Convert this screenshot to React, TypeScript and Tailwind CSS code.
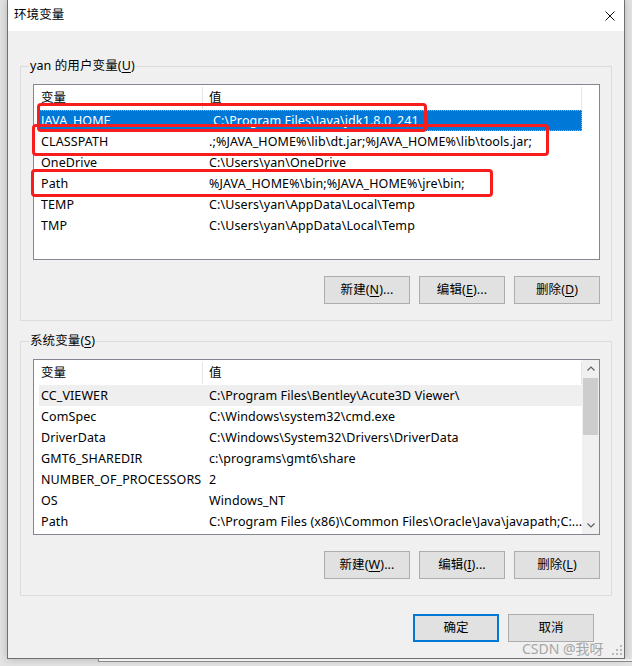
import React from 'react';

type Row = { name: string; value: string };

const userVars: Row[] = [
  { name: 'JAVA_HOME', value: 'C:\\Program Files\\Java\\jdk1.8.0_241' },
  { name: 'CLASSPATH', value: '.;%JAVA_HOME%\\lib\\dt.jar;%JAVA_HOME%\\lib\\tools.jar;' },
  { name: 'OneDrive', value: 'C:\\Users\\yan\\OneDrive' },
  { name: 'Path', value: '%JAVA_HOME%\\bin;%JAVA_HOME%\\jre\\bin;' },
  { name: 'TEMP', value: 'C:\\Users\\yan\\AppData\\Local\\Temp' },
  { name: 'TMP', value: 'C:\\Users\\yan\\AppData\\Local\\Temp' },
];

const systemVars: Row[] = [
  { name: 'CC_VIEWER', value: 'C:\\Program Files\\Bentley\\Acute3D Viewer\\' },
  { name: 'ComSpec', value: 'C:\\Windows\\system32\\cmd.exe' },
  { name: 'DriverData', value: 'C:\\Windows\\System32\\Drivers\\DriverData' },
  { name: 'GMT6_SHAREDIR', value: 'c:\\programs\\gmt6\\share' },
  { name: 'NUMBER_OF_PROCESSORS', value: '2' },
  { name: 'OS', value: 'Windows_NT' },
  { name: 'Path', value: 'C:\\Program Files (x86)\\Common Files\\Oracle\\Java\\javapath;C:...' },
];

function Button({ label, accel, tail, primary }: { label: string; accel?: string; tail?: string; primary?: boolean }) {
  return (
    <div
      className={`w-[86px] h-[28px] flex items-center justify-center bg-[#e1e1e1] ${
        primary ? 'border-2 border-[#0078d7]' : 'border border-[#adadad]'
      }`}
    >
      <span>
        {label}
        {accel && (
          <>
            (<span className="underline underline-offset-2">{accel}</span>)
          </>
        )}
        {tail}
      </span>
    </div>
  );
}

function Chevron({ up }: { up?: boolean }) {
  return (
    <div className="h-[17px] flex items-center justify-center">
      <svg width="8" height="5" viewBox="0 0 8 5">
        <polyline
          points={up ? '0.5,4.5 4,1 7.5,4.5' : '0.5,0.5 4,4 7.5,0.5'}
          fill="none"
          stroke="#606060"
          strokeWidth="1.2"
        />
      </svg>
    </div>
  );
}

function VarList({
  rows,
  selected,
  hovered,
  scrollbar,
}: {
  rows: Row[];
  selected?: number;
  hovered?: number;
  scrollbar?: boolean;
}) {
  return (
    <div className="h-[176px] border border-[#828790] bg-white flex overflow-hidden">
      <div className="w-[548px] flex flex-col">
        <div className="h-[25px] flex items-center shrink-0 pt-[1px]">
          <div className="w-[169px] h-[22px] pl-[7px] flex items-center border-r border-[#e5e5e5]">变量</div>
          <div className="w-[379px] h-[22px] pl-[6px] flex items-center border-r border-[#e5e5e5]">值</div>
        </div>
        {rows.map((r, i) => {
          const sel = i === selected;
          const hov = i === hovered;
          return (
            <div
              key={r.name + i}
              className={`ml-[5px] w-[543px] h-[21px] pt-[2px] shrink-0 flex items-center whitespace-nowrap overflow-hidden ${
                sel
                  ? 'bg-[#0078d7] text-white outline outline-1 outline-dotted outline-offset-[-1px] outline-[#e0a060]'
                  : hov
                  ? 'bg-[#efefef]'
                  : ''
              }`}
            >
              <div className="w-[170px] shrink-0 pl-[2px]">{r.name}</div>
              <div className={sel ? 'pl-[4px]' : ''}>{r.value}</div>
            </div>
          );
        })}
      </div>
      {scrollbar && (
        <div className="w-[17px] bg-[#f0f0f0] flex flex-col">
          <Chevron up />
          <div className="mx-[1px] mt-[1px] h-[57px] bg-[#cdcdcd]" />
          <div className="flex-1" />
          <Chevron />
        </div>
      )}
    </div>
  );
}

function Group({
  title,
  accel,
  children,
  className,
}: {
  title: string;
  accel: string;
  children: React.ReactNode;
  className?: string;
}) {
  return (
    <div className={`relative mx-[12px] border border-[#dcdcdc] pt-[17px] pl-[12px] pr-[11px] pb-[16px] ${className ?? ''}`}>
      <span className="absolute left-[8px] -top-[9px] leading-[16px] bg-[#f0f0f0] px-[1px]">
        {title}(<span className="underline underline-offset-2">{accel}</span>)
      </span>
      {children}
    </div>
  );
}

export default function App() {
  return (
    <div className="relative w-[632px] h-[666px] overflow-hidden bg-[#e3e3e3] font-['Noto_Sans','Noto_Sans_CJK_SC',sans-serif] text-[12.5px] tracking-[0.1px] text-black">
      <div className="ml-[7px] w-[618px] h-[659px] border-x border-b border-[#6f6f6f] bg-[#f0f0f0] flex flex-col shadow-[0_0_8px_rgba(0,0,0,0.22)]">
        <div className="h-[31px] bg-white flex items-center justify-between pl-[6px] pr-[9px] shrink-0">
          <span>环境变量</span>
          <svg width="10" height="10" viewBox="0 0 10 10">
            <path d="M0.5 0.5 L9.5 9.5 M9.5 0.5 L0.5 9.5" stroke="#111" strokeWidth="1" />
          </svg>
        </div>

        <Group title="yan 的用户变量" accel="U" className="mt-[35px]">
          <VarList rows={userVars} selected={0} />
          <div className="mt-[16px] flex justify-end gap-[9px]">
            <Button label="新建" accel="N" tail="..." />
            <Button label="编辑" accel="E" tail="..." />
            <Button label="删除" accel="D" />
          </div>
        </Group>

        <Group title="系统变量" accel="S" className="mt-[20px]">
          <VarList rows={systemVars} hovered={0} scrollbar />
          <div className="mt-[16px] flex justify-end gap-[9px]">
            <Button label="新建" accel="W" tail="..." />
            <Button label="编辑" accel="I" tail="..." />
            <Button label="删除" accel="L" />
          </div>
        </Group>

        <div className="mt-[18px] pr-[30px] flex justify-end gap-[9px]">
          <Button label="确定" primary />
          <Button label="取消" />
        </div>
      </div>
      <div className="ml-[98px] w-[534px] h-[3px] border-l border-b border-[#8a8a8a] bg-[#f0f0f0]" />

      {/* red annotation boxes */}
      <div className="absolute left-[37px] top-[103px] w-[390px] h-[29px] border-[3px] border-[#f81d1d] rounded-[4px]" />
      <div className="absolute left-[32px] top-[124px] w-[517px] h-[32px] border-[3px] border-[#f81d1d] rounded-[4px]" />
      <div className="absolute left-[31px] top-[169px] w-[462px] h-[28px] border-[3px] border-[#f81d1d] rounded-[4px]" />

      {/* sizing grip */}
      <svg className="absolute left-[612px] top-[645px]" width="10" height="10" viewBox="0 0 10 10">
        {[
          [8, 0],
          [8, 4],
          [4, 4],
          [8, 8],
          [4, 8],
          [0, 8],
        ].map(([x, y]) => (
          <rect key={`${x}-${y}`} x={x} y={y} width="2" height="2" fill="#b8b8b8" />
        ))}
      </svg>

      <div className="absolute left-[522px] top-[639px] text-[14px] leading-[20px] tracking-normal text-[#a6a6a6] whitespace-nowrap">
        CSDN @我呀
      </div>
    </div>
  );
}
